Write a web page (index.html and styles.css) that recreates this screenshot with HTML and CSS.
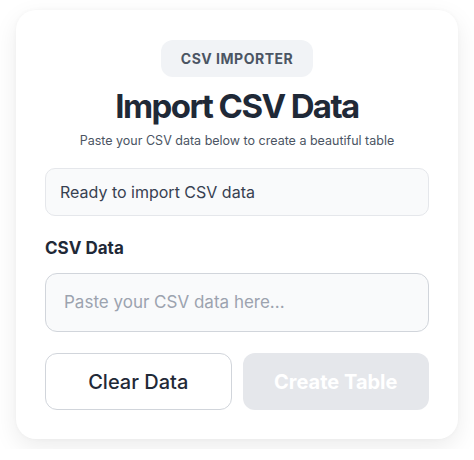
FILE: index.html
```html
<!DOCTYPE html>
<html lang="en">
<head>
  <meta charset="UTF-8" />
  <meta name="viewport" content="width=device-width, initial-scale=1.0"/>
  <title>CSV Importer</title>
  <link rel="stylesheet" href="styles.css">
</head>
<body>

  <div class="card">
    <div class="header">
      <span class="badge">CSV IMPORTER</span>
      <h1 class="title">Import CSV Data</h1>
      <p class="subtitle">Paste your CSV data below to create a beautiful table</p>
    </div>

    <div class="status">Ready to import CSV data</div>

    <label class="label" for="csv">CSV Data</label>
    <textarea class="input" id="csv" placeholder="Paste your CSV data here..."></textarea>

    <div class="actions">
      <button class="btn outline">Clear Data</button>
      <button class="btn disabled" disabled>Create Table</button>
    </div>
  </div>

</body>
</html>
```

FILE: styles.css
```css
* {
  box-sizing: border-box;
}

body {
  margin: 0;
  padding: 10px 16px;
  font-family: Inter, 'Noto Sans', sans-serif;
  background: #fff;
  color: #1f2937;
}

.card {
  background: #fff;
  border-radius: 20px;
  padding: 30px 29px 29px;
  box-shadow: 0 8px 24px rgba(0, 0, 0, 0.08), 0 0 4px rgba(0, 0, 0, 0.03);
  display: flex;
  flex-direction: column;
}

.header {
  display: flex;
  flex-direction: column;
  align-items: center;
}

.badge {
  height: 37px;
  padding: 0 20px;
  display: flex;
  align-items: center;
  background: #f1f3f6;
  border-radius: 12px;
  font-size: 14px;
  font-weight: 700;
  letter-spacing: 0.5px;
  color: #4b5563;
}

.title {
  margin: 9px 0 0;
  font-size: 33px;
  line-height: 40px;
  font-weight: 700;
  letter-spacing: -1.6px;
  color: #1f2937;
}

.subtitle {
  margin: 5px 0 0;
  font-size: 12.5px;
  line-height: 20px;
  color: #4b5563;
}

.status {
  margin-top: 17px;
  height: 48px;
  padding: 0 14px;
  display: flex;
  align-items: center;
  background: #f9fafb;
  border: 1px solid #e5e7eb;
  border-radius: 10px;
  font-size: 16px;
  color: #374151;
}

.label {
  margin-top: 20px;
  font-size: 17px;
  line-height: 24px;
  font-weight: 700;
  color: #1f2937;
}

.input {
  margin-top: 13px;
  height: 59px;
  padding: 16px 18px;
  resize: none;
  background: #f9fafb;
  border: 1px solid #d1d5db;
  border-radius: 12px;
  font-family: inherit;
  font-size: 17px;
  line-height: 24px;
  color: #374151;
  outline: none;
}

.input::placeholder {
  color: #9ca3af;
}

.actions {
  margin-top: 21px;
  display: grid;
  grid-template-columns: 1fr 1fr;
  gap: 11px;
}

.btn {
  height: 57px;
  border-radius: 12px;
  font-family: inherit;
  font-size: 20px;
}

.btn.outline {
  background: #fff;
  border: 1px solid #d1d5db;
  color: #1f2937;
  font-weight: 500;
}

.btn.disabled {
  background: #e5e7eb;
  border: none;
  color: #fff;
  font-weight: 700;
}
```
